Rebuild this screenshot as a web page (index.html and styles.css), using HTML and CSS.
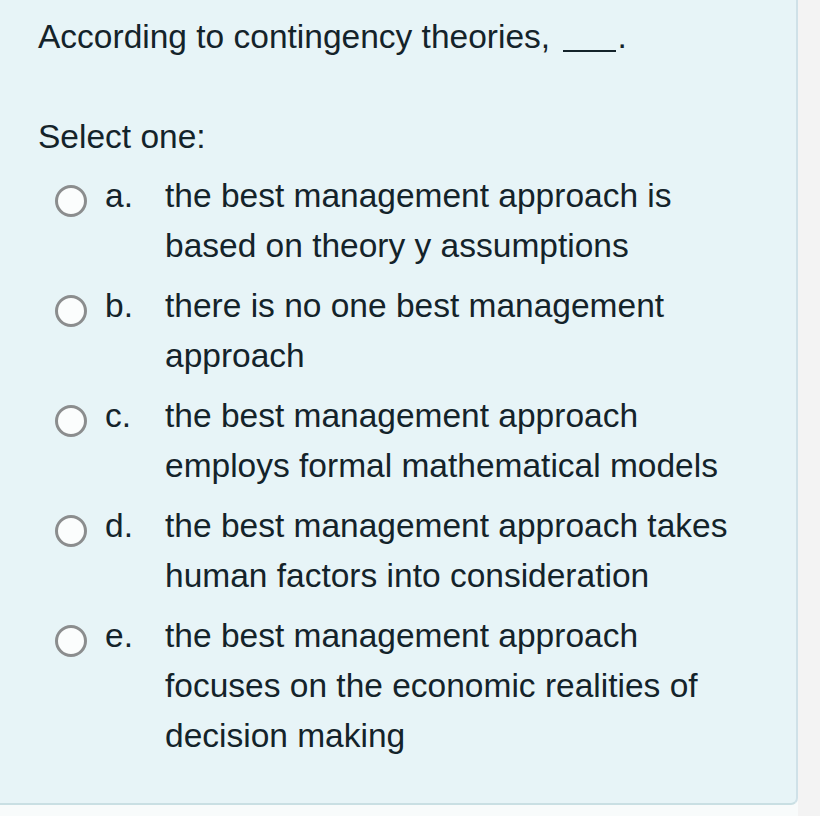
FILE: index.html
```html
<!DOCTYPE html>
<html>
<head>
<meta charset="utf-8">
<link rel="stylesheet" href="styles.css">
</head>
<body>
<div class="page">
<div class="card">
  <div class="question">According to contingency theories, <span class="blank"></span>.</div>
  <div class="prompt">Select one:</div>
  <div class="options">
    <div class="option"><span class="radio"></span><span class="letter">a.</span><span class="text">the best management approach is based on theory y assumptions</span></div>
    <div class="option"><span class="radio"></span><span class="letter">b.</span><span class="text">there is no one best management approach</span></div>
    <div class="option"><span class="radio"></span><span class="letter">c.</span><span class="text">the best management approach employs formal mathematical models</span></div>
    <div class="option"><span class="radio"></span><span class="letter">d.</span><span class="text">the best management approach takes human factors into consideration</span></div>
    <div class="option"><span class="radio"></span><span class="letter">e.</span><span class="text">the best management approach focuses on the economic realities of decision making</span></div>
  </div>
</div>
</div>
</body>
</html>
```

FILE: styles.css
```css
html, body {
  margin: 0;
  padding: 0;
  background: #f3f3f3;
}
body {
  width: 820px;
  height: 816px;
  overflow: hidden;
  font-family: "Liberation Sans", Arial, sans-serif;
  color: #14232a;
}
.page {
  width: 798px;
  height: 816px;
  background: #f8fbfb;
}
.card {
  box-sizing: border-box;
  width: 798px;
  height: 805px;
  background: #e7f4f7;
  border-right: 2px solid #cfe1e8;
  border-bottom: 2px solid #c9dfe3;
  border-bottom-right-radius: 7px;
  padding: 12px 0 0 38px;
  font-size: 33.5px;
  line-height: 50px;
}
.blank {
  display: inline-block;
  width: 53px;
  border-bottom: 2px solid #14232a;
  vertical-align: -4px;
  margin-left: 4px;
  margin-right: 1px;
}
.prompt {
  margin-top: 50px;
}
.options {
  margin-top: 9px;
  display: flex;
  flex-direction: column;
  gap: 10px;
}
.option {
  display: grid;
  grid-template-columns: 67px 60px 578px;
  align-items: start;
}
.radio {
  box-sizing: border-box;
  width: 32px;
  height: 32px;
  margin: 14px 0 0 17px;
  border: 3px solid #8b8d8e;
  border-radius: 50%;
  background: #fbfdfd;
}
.letter {
  display: block;
}
.text {
  display: block;
}
```
